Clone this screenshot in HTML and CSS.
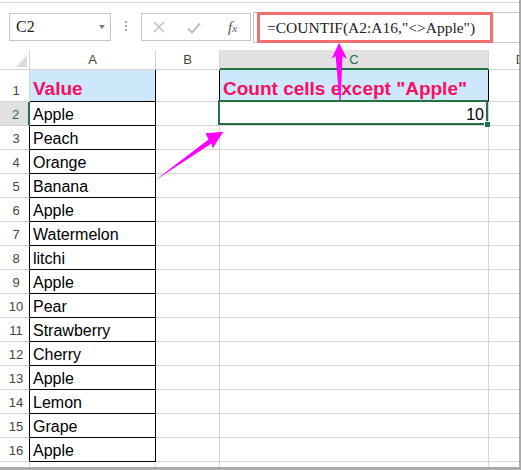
FILE: index.html
```html
<!DOCTYPE html>
<html>
<head>
<meta charset="utf-8">
<link rel="stylesheet" href="styles.css">
</head>
<body>
<div class="app">
  <div class="toolbar">
    <div class="tb">
      <div class="namebox"><span>C2</span><span class="nb-arrow"></span></div>
      <div class="grip"><i></i><i></i><i></i></div>
      <div class="fxbox">
        <svg class="ic-x" width="12" height="12" viewBox="0 0 12 12"><path d="M1 1L11 11M11 1L1 11" stroke="#bdbdbd" stroke-width="1.4" fill="none"/></svg>
        <svg class="ic-ok" width="14" height="12" viewBox="0 0 14 12"><path d="M1 6.5L5 10.5L13 1.5" stroke="#bdbdbd" stroke-width="2" fill="none"/></svg>
        <span class="fx">f<small>x</small></span>
      </div>
      <div class="fbar"><div class="fbox">=COUNTIF(A2:A16,"&lt;&gt;Apple")</div></div>
    </div>
  </div>
  <div class="sheet">
    <div class="grid">
      <div class="corner"><span class="tri"></span></div>
      <div class="ch">A</div><div class="ch">B</div><div class="ch ch-sel">C</div><div class="ch">D</div>

      <div class="rh">1</div><div class="c a hd">Value</div><div class="c bk-r"></div><div class="c hd bk-r">Count cells except "Apple"</div><div class="c"></div>
      <div class="rh rh-sel">2</div><div class="c a">Apple</div><div class="c"></div><div class="c num sel">10</div><div class="c"></div>
      <div class="rh bk">3</div><div class="c a">Peach</div><div class="c"></div><div class="c"></div><div class="c"></div>
      <div class="rh bk">4</div><div class="c a">Orange</div><div class="c"></div><div class="c"></div><div class="c"></div>
      <div class="rh bk">5</div><div class="c a">Banana</div><div class="c"></div><div class="c"></div><div class="c"></div>
      <div class="rh bk">6</div><div class="c a">Apple</div><div class="c"></div><div class="c"></div><div class="c"></div>
      <div class="rh bk">7</div><div class="c a">Watermelon</div><div class="c"></div><div class="c"></div><div class="c"></div>
      <div class="rh bk">8</div><div class="c a">litchi</div><div class="c"></div><div class="c"></div><div class="c"></div>
      <div class="rh bk">9</div><div class="c a">Apple</div><div class="c"></div><div class="c"></div><div class="c"></div>
      <div class="rh bk">10</div><div class="c a">Pear</div><div class="c"></div><div class="c"></div><div class="c"></div>
      <div class="rh bk">11</div><div class="c a">Strawberry</div><div class="c"></div><div class="c"></div><div class="c"></div>
      <div class="rh bk">12</div><div class="c a">Cherry</div><div class="c"></div><div class="c"></div><div class="c"></div>
      <div class="rh bk">13</div><div class="c a">Apple</div><div class="c"></div><div class="c"></div><div class="c"></div>
      <div class="rh bk">14</div><div class="c a">Lemon</div><div class="c"></div><div class="c"></div><div class="c"></div>
      <div class="rh bk">15</div><div class="c a">Grape</div><div class="c"></div><div class="c"></div><div class="c"></div>
      <div class="rh bk">16</div><div class="c a">Apple</div><div class="c"></div><div class="c"></div><div class="c"></div>
      <div class="rh"></div><div class="c"></div><div class="c"></div><div class="c"></div><div class="c"></div>
    </div>
  </div>
  <svg class="arrows" width="521" height="470" viewBox="0 0 521 470">
    <polygon points="154,181 208.5,139.5 205.5,133.3 223.3,131.7 212.5,148.5 211.5,143.5" fill="#ff00ff"/>
    <polygon points="339,42.8 347,59 342.5,56 340.6,100 339.4,100 335.6,56 331.5,59" fill="#ff00ff"/>
  </svg>
</div>
</body>
</html>
```

FILE: styles.css
```css
body {
  margin: 0;
  background: #fff;
}

.app {
  position: relative;
  width: 519px;
  height: 467px;
  border-right: 2px solid #ababab;
  border-bottom: 3px solid #ababab;
  overflow: hidden;
  background: #fff;
  font-family: "Liberation Sans", Arial, sans-serif;
}

.toolbar {
  height: 50px;
  box-sizing: border-box;
  padding-top: 2px;
}

.tb {
  border-top: 1px solid #d5d5d5;
  display: flex;
  align-items: flex-start;
  padding: 10px 0 0 9px;
}

.namebox {
  width: 102px;
  height: 28px;
  box-sizing: border-box;
  border: 1px solid #c6c6c6;
  display: flex;
  align-items: center;
  padding-left: 6px;
  font: 16px/18px "Liberation Serif", "Times New Roman", serif;
  color: #222;
}

.nb-arrow {
  margin-left: auto;
  margin-right: 5px;
  width: 0;
  height: 0;
  border-left: 3.5px solid transparent;
  border-right: 3.5px solid transparent;
  border-top: 4px solid #7a7a7a;
}

.grip {
  margin-left: 14px;
  margin-top: 8px;
  display: flex;
  flex-direction: column;
  gap: 2px;
}

.grip i {
  display: block;
  width: 2px;
  height: 2px;
  background: #a8a8a8;
}

.fxbox {
  margin-left: 14px;
  width: 110px;
  height: 28px;
  box-sizing: border-box;
  border: 1px solid #c6c6c6;
  display: flex;
  align-items: center;
}

.ic-x {
  margin-left: 11px;
}

.ic-ok {
  margin-left: 22px;
  margin-top: 2px;
}

.fx {
  margin-left: 27px;
  font: italic 15px "Liberation Serif", "Times New Roman", serif;
  color: #555;
}

.fx small {
  font-size: 11px;
}

.fbar {
  margin-left: 2px;
  margin-top: -1px;
  height: 31px;
  flex: 1;
  box-sizing: border-box;
  border-left: 1px solid #c6c6c6;
  box-shadow: inset 0 1px #c6c6c6, inset 0 -1px #c6c6c6;
  display: flex;
}

.fbox {
  margin-left: 3px;
  width: 236px;
  height: 31px;
  box-sizing: border-box;
  border: 3px solid #f26f70;
  padding-left: 7px;
  font: 15.5px/25px "Liberation Serif", "Times New Roman", serif;
  color: #222;
  background: #fff;
  white-space: nowrap;
}

.sheet {
  height: 417px;
  overflow: hidden;
}

.grid {
  display: grid;
  grid-template-columns: 30px 126px 64px 269px 64px;
  grid-template-rows: 20px 32px repeat(16, 24px);
  width: 553px;
}

.grid > div {
  box-sizing: border-box;
  border-right: 1px solid #d4d4d4;
  border-bottom: 1px solid #d4d4d4;
}

.corner {
  display: flex;
  align-items: flex-end;
  justify-content: flex-end;
}

.tri {
  width: 0;
  height: 0;
  border-left: 11px solid transparent;
  border-bottom: 12px solid #dcdcdc;
  margin: 0 2px 2px 0;
}

.ch {
  display: flex;
  align-items: center;
  justify-content: center;
  font-size: 13px;
  color: #444;
}

.grid > .ch-sel {
  background: #e1e1e1;
  border-bottom: 2px solid #217346;
  color: #217346;
}

.rh {
  display: flex;
  align-items: flex-end;
  justify-content: center;
  padding: 0 0 3px 3px;
  font-size: 13px;
  line-height: 15px;
  color: #444;
}

.grid > .rh.bk {
  border-right-color: #000;
}

.grid > .rh-sel {
  background: #e1e1e1;
  color: #217346;
  border-right: 2px solid #217346;
}

.c {
  display: flex;
  align-items: flex-end;
  padding: 0 4px 1px 3px;
  font-size: 16px;
  line-height: 18px;
  color: #000;
  white-space: nowrap;
}

.grid > .a {
  border-right-color: #000;
  border-bottom-color: #000;
}

.grid > .bk-r {
  border-right-color: #000;
}

.hd {
  background: #cce8fa;
  color: #fa0d63;
  font-weight: bold;
  font-size: 19px;
  line-height: 22px;
}

.num {
  justify-content: flex-end;
}

.sel {
  position: relative;
}

.sel::before {
  content: "";
  position: absolute;
  left: -2px;
  top: -2px;
  right: 0;
  bottom: 0;
  border: 2px solid #217346;
  z-index: 1;
}

.sel::after {
  content: "";
  position: absolute;
  right: -3px;
  bottom: -3px;
  width: 5px;
  height: 5px;
  background: #217346;
  border: 1px solid #fff;
  z-index: 2;
}

.arrows {
  position: absolute;
  left: 0;
  top: 0;
  z-index: 5;
}
```
